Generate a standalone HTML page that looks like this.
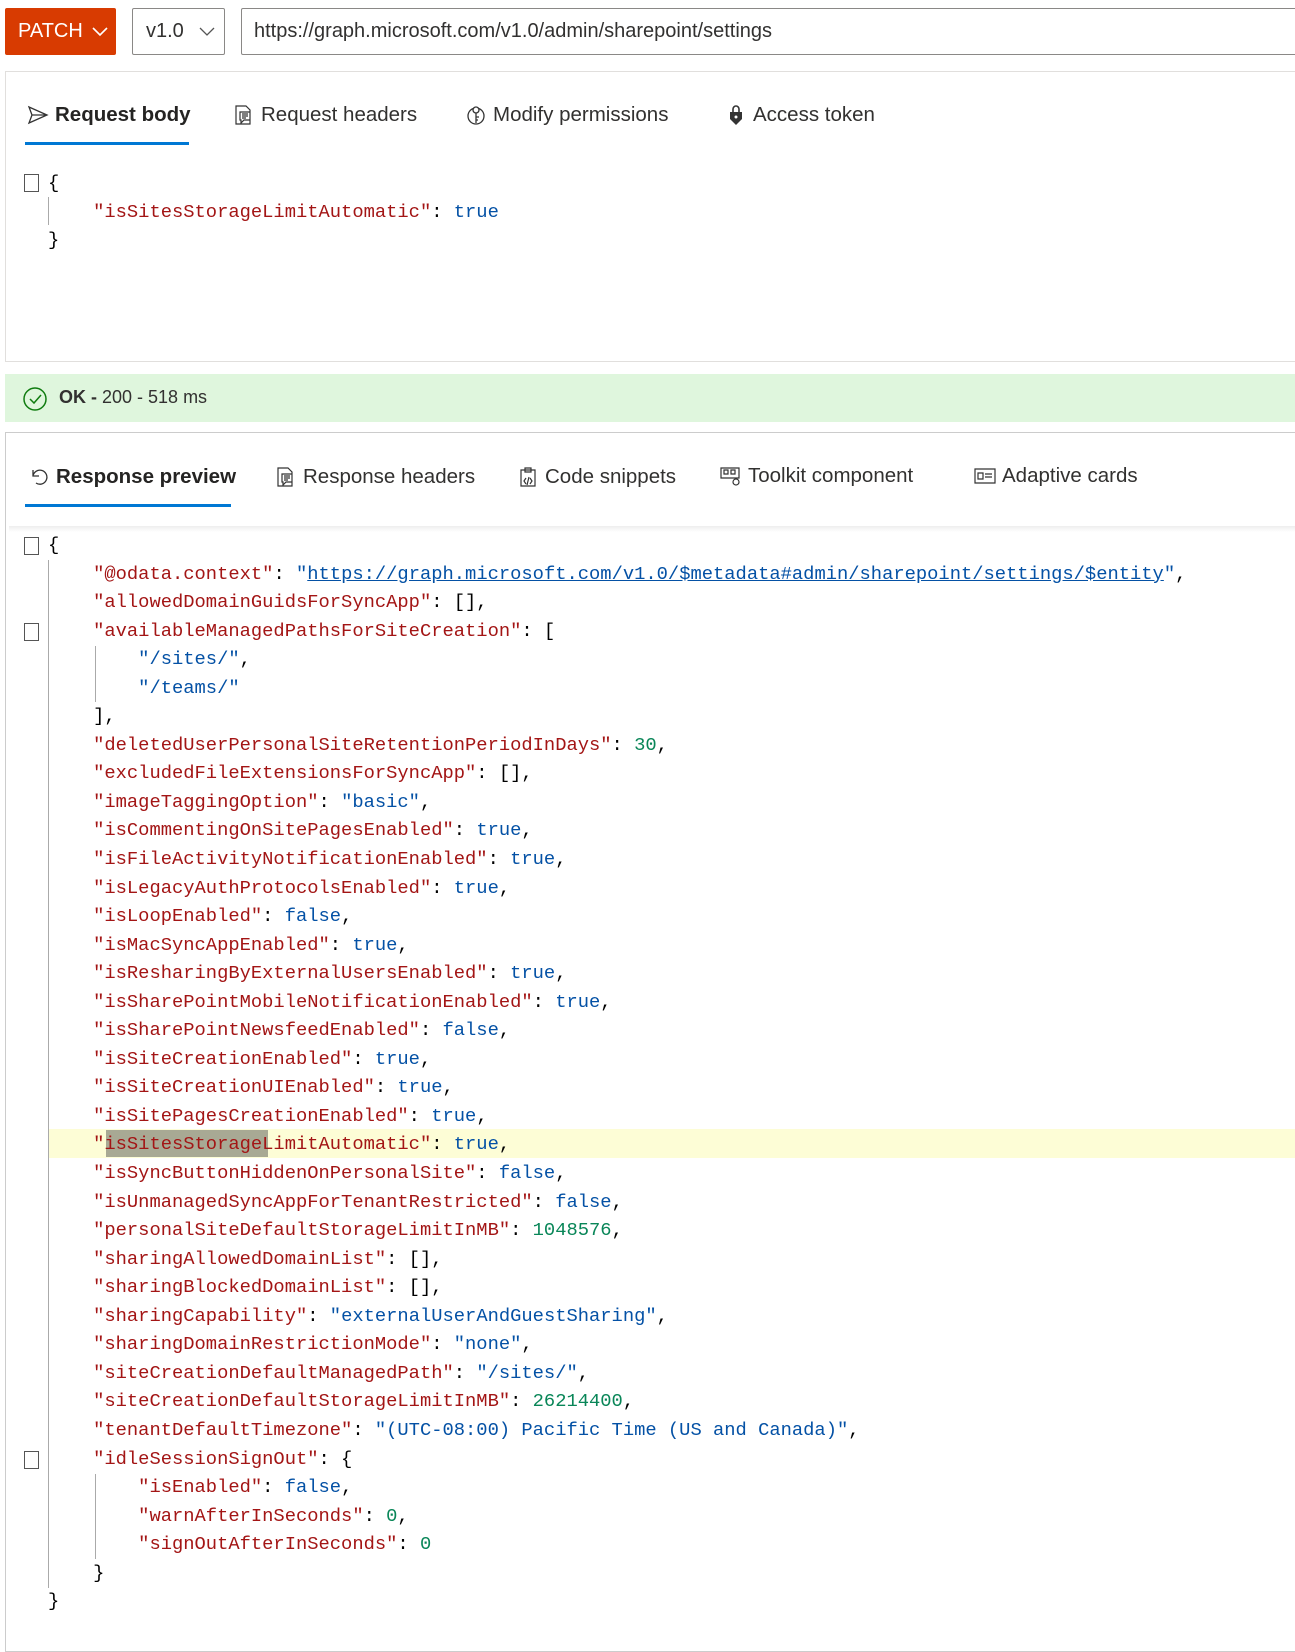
<!DOCTYPE html>
<html><head><meta charset="utf-8"><style>
*{margin:0;padding:0;box-sizing:border-box}
body{width:1295px;height:1637px;background:#fff;position:relative;overflow:hidden;font-family:"Liberation Sans",sans-serif;color:#323130}
.abs{position:absolute}
.tab{position:absolute;font-size:20.5px;white-space:nowrap;color:#323130;display:flex;align-items:center;gap:6px}
.tab svg{width:22px;height:22px}
.code{position:absolute;font-family:"Liberation Mono",monospace;font-size:18.8px;white-space:pre;line-height:28.55px;color:#000}
.k{color:#a31515}.s{color:#0451a5}.n{color:#098658}
.cb{position:absolute;width:15px;height:18px;border:1.5px solid #555;background:#fff}
.vl{position:absolute;width:1px;background:#aaa}
</style></head><body>
<div class="abs" style="left:5px;top:8px;width:111px;height:47px;background:#d83b01;border-radius:2px;color:#fff;font-size:20px;display:flex;align-items:center;padding-left:13px">PATCH<svg width="18" height="12" style="margin-left:8px" viewBox="0 0 18 12"><path d="M2 2l7 7 7-7" stroke="#fff" stroke-width="1.6" fill="none"/></svg></div>
<div class="abs" style="left:132px;top:8px;width:93px;height:47px;border:1px solid #8a8886;border-radius:2px;font-size:20px;display:flex;align-items:center;padding-left:13px">v1.0<svg width="18" height="12" style="margin-left:14px" viewBox="0 0 18 12"><path d="M2 2l7 7 7-7" stroke="#555" stroke-width="1.3" fill="none"/></svg></div>
<div class="abs" style="left:241px;top:8px;width:1060px;height:47px;border:1px solid #8a8886;border-radius:2px;font-size:20px;display:flex;align-items:center;padding-left:12px">https://graph.microsoft.com/v1.0/admin/sharepoint/settings</div>

<div class="abs" style="left:5px;top:71px;width:1300px;height:291px;border:1px solid #e1dfdd;border-right:none"></div>
<div class="tab" style="left:27px;top:103px;font-weight:bold;color:#252423"><svg viewBox="0 0 22 22"><path d="M2 3l18 8-18 8 3-8z M5 11h15" stroke="#333" stroke-width="1.3" fill="none"/></svg>Request body</div>
<div class="tab" style="left:233px;top:103px"><svg viewBox="0 0 22 22"><path d="M3 2h10l4 4v14H3z M7 8h10v8H11l-3 3v-3H7z M9 10h6M9 12h6M9 14h4" stroke="#333" stroke-width="1.2" fill="none"/></svg>Request headers</div>
<div class="tab" style="left:465px;top:103px"><svg viewBox="0 0 22 22"><circle cx="11" cy="12" r="8" stroke="#333" stroke-width="1.3" fill="none"/><circle cx="11" cy="6" r="3" stroke="#333" stroke-width="1.3" fill="#fff"/><path d="M11 9v10M11 13h3M11 16h2" stroke="#333" stroke-width="1.3"/></svg>Modify permissions</div>
<div class="tab" style="left:725px;top:103px"><svg viewBox="0 0 22 22"><path d="M8 8V5a3 3 0 016 0v3" stroke="#333" stroke-width="1.6" fill="none"/><path d="M5 8h12v7l-6 6-6-6z" fill="#333"/><circle cx="11" cy="13" r="1.5" fill="#fff"/></svg>Access token</div>
<div class="abs" style="left:25px;top:142px;width:164px;height:3px;background:#0078d4"></div>
<div class="cb" style="left:24px;top:174px"></div>
<div class="vl" style="left:48px;top:197px;height:28px"></div>
<div class="code" style="left:48px;top:169px">{
    <span class="k">"isSitesStorageLimitAutomatic"</span>: <span class="s">true</span>
}</div>

<div class="abs" style="left:5px;top:374px;width:1300px;height:48px;background:#dff6dd"></div>
<svg class="abs" style="left:22px;top:386px" width="26" height="26" viewBox="0 0 26 26"><circle cx="13" cy="13" r="11" stroke="#107c10" stroke-width="1.5" fill="none"/><path d="M8 13l4 4 7-8" stroke="#107c10" stroke-width="1.5" fill="none"/></svg>
<div class="abs" style="left:59px;top:387px;font-size:18px;color:#323130"><b>OK -</b> 200 - 518 ms</div>

<div class="abs" style="left:5px;top:432px;width:1300px;height:1220px;border:1px solid #ccc;border-right:none"></div>
<div class="tab" style="left:28px;top:465px;font-weight:bold;color:#252423"><svg viewBox="0 0 22 22"><path d="M5 4v6h6 M5 10a7 7 0 113 7" stroke="#333" stroke-width="1.3" fill="none"/></svg>Response preview</div>
<div class="tab" style="left:275px;top:465px"><svg viewBox="0 0 22 22"><path d="M3 2h10l4 4v14H3z M7 8h10v8H11l-3 3v-3H7z M9 10h6M9 12h6M9 14h4" stroke="#333" stroke-width="1.2" fill="none"/></svg>Response headers</div>
<div class="tab" style="left:517px;top:465px"><svg viewBox="0 0 22 22"><path d="M4 4h14v16H4z M8 2h6v4H8z M9 12l-2 3 2 3M13 12l2 3-2 3M12 11l-2 8" stroke="#333" stroke-width="1.2" fill="none"/></svg>Code snippets</div>
<div class="tab" style="left:720px;top:464px"><svg viewBox="0 0 22 22"><path d="M1 3h18v10H1z M4 5h4v4H4z M11 5h4v4h-4z" stroke="#333" stroke-width="1.2" fill="none"/><circle cx="16" cy="17" r="3" stroke="#333" stroke-width="1.2" fill="none"/></svg>Toolkit component</div>
<div class="tab" style="left:974px;top:464px"><svg viewBox="0 0 22 22"><path d="M1 4h20v14H1z M4 8h5v6H4z M11 9h7M11 12h7" stroke="#333" stroke-width="1.2" fill="none"/></svg>Adaptive cards</div>
<div class="abs" style="left:25px;top:504px;width:206px;height:3px;background:#0078d4"></div>
<div class="abs" style="left:9px;top:526px;width:1290px;height:6px;background:linear-gradient(#eee,#fff)"></div>

<div class="abs" style="left:48px;top:1129px;width:1250px;height:29px;background:#fdfdd6"></div>
<div class="abs" style="left:106px;top:1130px;width:162px;height:27px;background:#a8a994"></div>
<div class="cb" style="left:24px;top:537px"></div>
<div class="cb" style="left:24px;top:623px"></div>
<div class="cb" style="left:24px;top:1451px"></div>
<div class="vl" style="left:48px;top:560px;height:1028px"></div>
<div class="vl" style="left:95px;top:646px;height:56px"></div>
<div class="vl" style="left:95px;top:1474px;height:85px"></div>
<div class="code" style="left:48px;top:531px">{
    <span class="k">"@odata.context"</span>: <span class="s">"<u>https://graph.microsoft.com/v1.0/$metadata#admin/sharepoint/settings/$entity</u>"</span>,
    <span class="k">"allowedDomainGuidsForSyncApp"</span>: [],
    <span class="k">"availableManagedPathsForSiteCreation"</span>: [
        <span class="s">"/sites/"</span>,
        <span class="s">"/teams/"</span>
    ],
    <span class="k">"deletedUserPersonalSiteRetentionPeriodInDays"</span>: <span class="n">30</span>,
    <span class="k">"excludedFileExtensionsForSyncApp"</span>: [],
    <span class="k">"imageTaggingOption"</span>: <span class="s">"basic"</span>,
    <span class="k">"isCommentingOnSitePagesEnabled"</span>: <span class="s">true</span>,
    <span class="k">"isFileActivityNotificationEnabled"</span>: <span class="s">true</span>,
    <span class="k">"isLegacyAuthProtocolsEnabled"</span>: <span class="s">true</span>,
    <span class="k">"isLoopEnabled"</span>: <span class="s">false</span>,
    <span class="k">"isMacSyncAppEnabled"</span>: <span class="s">true</span>,
    <span class="k">"isResharingByExternalUsersEnabled"</span>: <span class="s">true</span>,
    <span class="k">"isSharePointMobileNotificationEnabled"</span>: <span class="s">true</span>,
    <span class="k">"isSharePointNewsfeedEnabled"</span>: <span class="s">false</span>,
    <span class="k">"isSiteCreationEnabled"</span>: <span class="s">true</span>,
    <span class="k">"isSiteCreationUIEnabled"</span>: <span class="s">true</span>,
    <span class="k">"isSitePagesCreationEnabled"</span>: <span class="s">true</span>,
    <span class="k">"isSitesStorageLimitAutomatic"</span>: <span class="s">true</span>,
    <span class="k">"isSyncButtonHiddenOnPersonalSite"</span>: <span class="s">false</span>,
    <span class="k">"isUnmanagedSyncAppForTenantRestricted"</span>: <span class="s">false</span>,
    <span class="k">"personalSiteDefaultStorageLimitInMB"</span>: <span class="n">1048576</span>,
    <span class="k">"sharingAllowedDomainList"</span>: [],
    <span class="k">"sharingBlockedDomainList"</span>: [],
    <span class="k">"sharingCapability"</span>: <span class="s">"externalUserAndGuestSharing"</span>,
    <span class="k">"sharingDomainRestrictionMode"</span>: <span class="s">"none"</span>,
    <span class="k">"siteCreationDefaultManagedPath"</span>: <span class="s">"/sites/"</span>,
    <span class="k">"siteCreationDefaultStorageLimitInMB"</span>: <span class="n">26214400</span>,
    <span class="k">"tenantDefaultTimezone"</span>: <span class="s">"(UTC-08:00) Pacific Time (US and Canada)"</span>,
    <span class="k">"idleSessionSignOut"</span>: {
        <span class="k">"isEnabled"</span>: <span class="s">false</span>,
        <span class="k">"warnAfterInSeconds"</span>: <span class="n">0</span>,
        <span class="k">"signOutAfterInSeconds"</span>: <span class="n">0</span>
    }
}</div>
</body></html>
